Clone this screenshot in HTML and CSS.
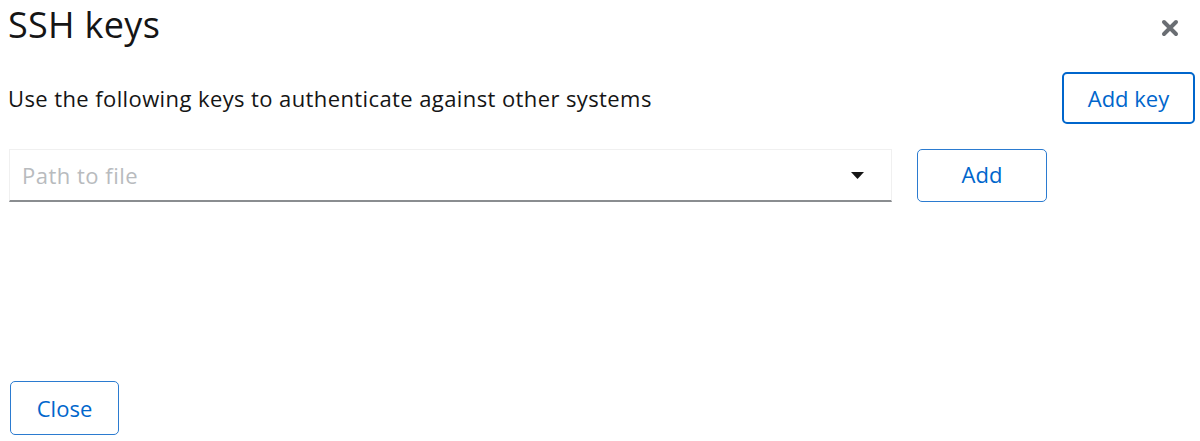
FILE: index.html
```html
<!DOCTYPE html>
<html>
<head>
<meta charset="utf-8">
<link rel="stylesheet" href="styles.css">
</head>
<body>
<div class="modal">
  <header class="modal-header">
    <h1 class="title">SSH keys</h1>
    <button class="close-x" aria-label="Close">
      <svg width="18" height="18" viewBox="0 0 18 18"><path d="M3 3L15 15M15 3L3 15" stroke="#6a6e73" stroke-width="4" stroke-linecap="round"/></svg>
    </button>
  </header>
  <div class="desc-row">
    <p class="desc">Use the following keys to authenticate against other systems</p>
    <button class="btn btn-secondary btn-key">Add key</button>
  </div>
  <div class="add-row">
    <div class="select">
      <span class="placeholder">Path to file</span>
      <svg class="caret" width="13" height="9" viewBox="0 0 13 9"><path d="M0 1h13L6.5 8z" fill="#151515"/></svg>
    </div>
    <button class="btn btn-secondary btn-add">Add</button>
  </div>
  <div class="spacer"></div>
  <footer class="modal-footer">
    <button class="btn btn-secondary btn-close">Close</button>
  </footer>
</div>
</body>
</html>
```
FILE: styles.css
```css
html, body {
  margin: 0;
  padding: 0;
  background: #fff;
  font-family: "Open Sans", "Liberation Sans", sans-serif;
  color: #151515;
}
.modal {
  height: 441px;
  box-sizing: border-box;
  padding: 0 5px 6px 8px;
  display: flex;
  flex-direction: column;
}
.modal-header {
  display: flex;
  justify-content: space-between;
  align-items: center;
  height: 50px;
}
.title {
  margin: 0;
  font-size: 36px;
  font-weight: 400;
  letter-spacing: 0.3px;
  line-height: 46px;
}
.close-x {
  border: 0;
  background: none;
  padding: 0;
  margin-right: 16px;
  margin-top: 6px;
  display: flex;
}
.desc-row {
  display: flex;
  justify-content: space-between;
  align-items: center;
  margin-top: 22px;
}
.desc {
  margin: 0;
  font-size: 22px;
  letter-spacing: 0.4px;
  color: #151515;
}
.btn {
  font-family: inherit;
  background: #fff;
  color: #0066cc;
  border: 2px solid #0066cc;
  border-radius: 5px;
  font-size: 22px;
  cursor: pointer;
}
.btn-key {
  width: 133px;
  height: 52px;
}
.add-row {
  display: flex;
  align-items: center;
  margin-top: 25px;
  gap: 25px;
  padding-left: 1px;
}
.select {
  width: 883px;
  height: 53px;
  box-sizing: border-box;
  border: 1px solid #f0f0f0;
  border-bottom: 2px solid #8a8d90;
  display: flex;
  align-items: center;
  justify-content: space-between;
  padding: 0 27px 0 12px;
}
.placeholder {
  color: #b8bbbe;
  font-size: 22px;
  letter-spacing: 0.5px;
}
.btn-add {
  width: 130px;
  height: 53px;
  border-color: #2b7bd0;
  border-width: 1.5px;
  padding-bottom: 4px;
}
.spacer {
  flex: 1;
}
.modal-footer {
  display: flex;
}
.btn-close {
  width: 109px;
  height: 54px;
  margin-left: 2px;
  border-color: #2b7bd0;
  border-width: 1.5px;
}
```
